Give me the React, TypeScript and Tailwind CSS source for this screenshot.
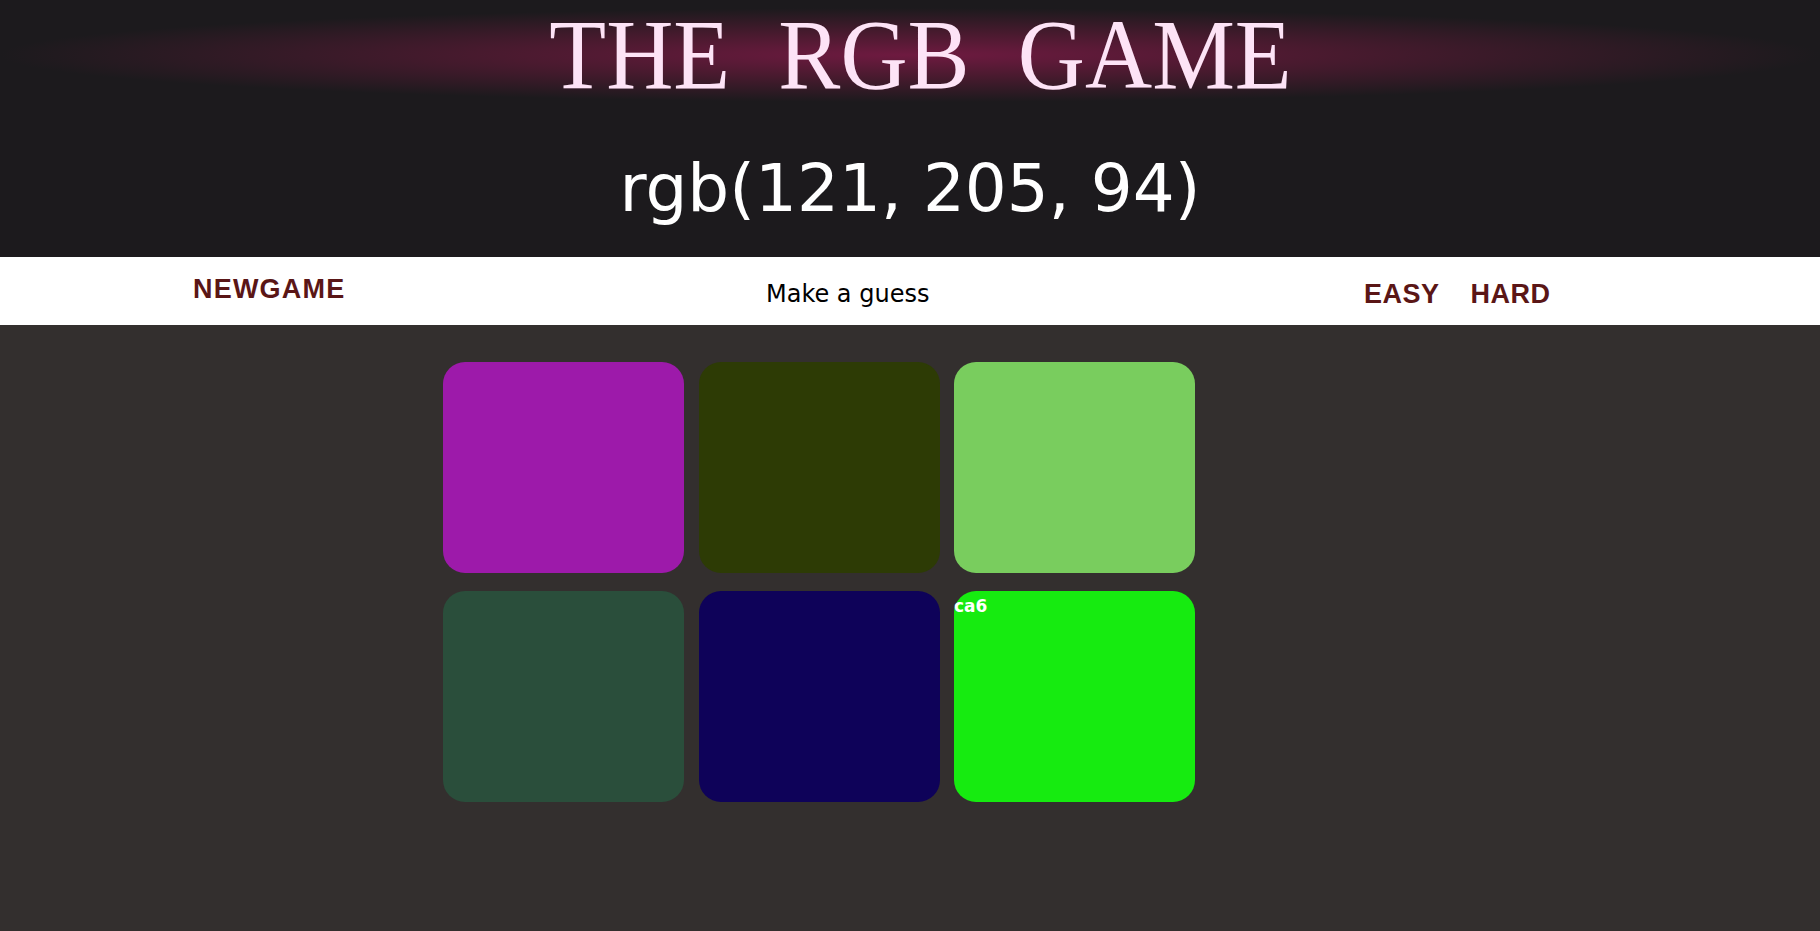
const tiles = [
  { color: '#9d1aaa' },
  { color: '#2d3b05' },
  { color: 'rgb(121, 205, 94)' },
  { color: '#2a4e3b' },
  { color: '#0e0259' },
  { color: '#16eb10', label: 'ca6' },
];

const App = () => {
  return (
    <div className="min-h-[931px] bg-[#332f2e]">
      <header className="h-[257px] bg-[#1c1a1d]">
        <div className="relative h-[103px]">
          {/* soft pink glow behind the title */}
          <div className="absolute left-0 right-0 top-[8px] h-[94px] bg-[radial-gradient(ellipse_closest-side_at_center,#6e1a40_0%,#4a1a2f_45%,rgba(28,26,29,0)_100%)]" />
          <h1 className="relative origin-[center_87px] scale-y-[1.07] pt-[10px] pl-[21px] text-center text-[93px] leading-none [word-spacing:25px] text-[#fde3f6] font-['Liberation_Serif',serif]">
            THE RGB GAME
          </h1>
        </div>
        <h2 className="mt-[53px] text-center text-[66px] leading-none text-white font-['DejaVu_Sans',sans-serif]">
          rgb(121, 205, 94)
        </h2>
      </header>

      <nav className="grid h-[68px] grid-cols-[766px_598px_1fr] bg-white">
        <button className="mt-[19px] self-start pl-[193px] text-left text-[27px] font-bold leading-none tracking-[1.2px] text-[#5a1616] font-['Liberation_Sans',sans-serif]">
          NEWGAME
        </button>
        <span className="mt-[25px] self-start text-[24px] leading-none text-black font-['DejaVu_Sans',sans-serif]">
          Make a guess
        </span>
        <div className="mt-[24px] flex gap-[31px] self-start text-[27px] font-bold leading-none tracking-[0.5px] text-[#5a1616] font-['Liberation_Sans',sans-serif]">
          <button>EASY</button>
          <button>HARD</button>
        </div>
      </nav>

      <main className="pt-[37px] pl-[443px]">
        <div className="grid w-[752px] grid-cols-3 gap-x-[14.5px] gap-y-[18px]">
          {tiles.map((t, i) => (
            <div
              key={i}
              className="h-[211px] rounded-[22px]"
              style={{ backgroundColor: t.color }}
            >
              {t.label && (
                <span className="block pt-[7px] text-[17px] font-bold leading-none text-white font-['DejaVu_Sans',sans-serif]">
                  {t.label}
                </span>
              )}
            </div>
          ))}
        </div>
      </main>
    </div>
  );
};

export default App;
